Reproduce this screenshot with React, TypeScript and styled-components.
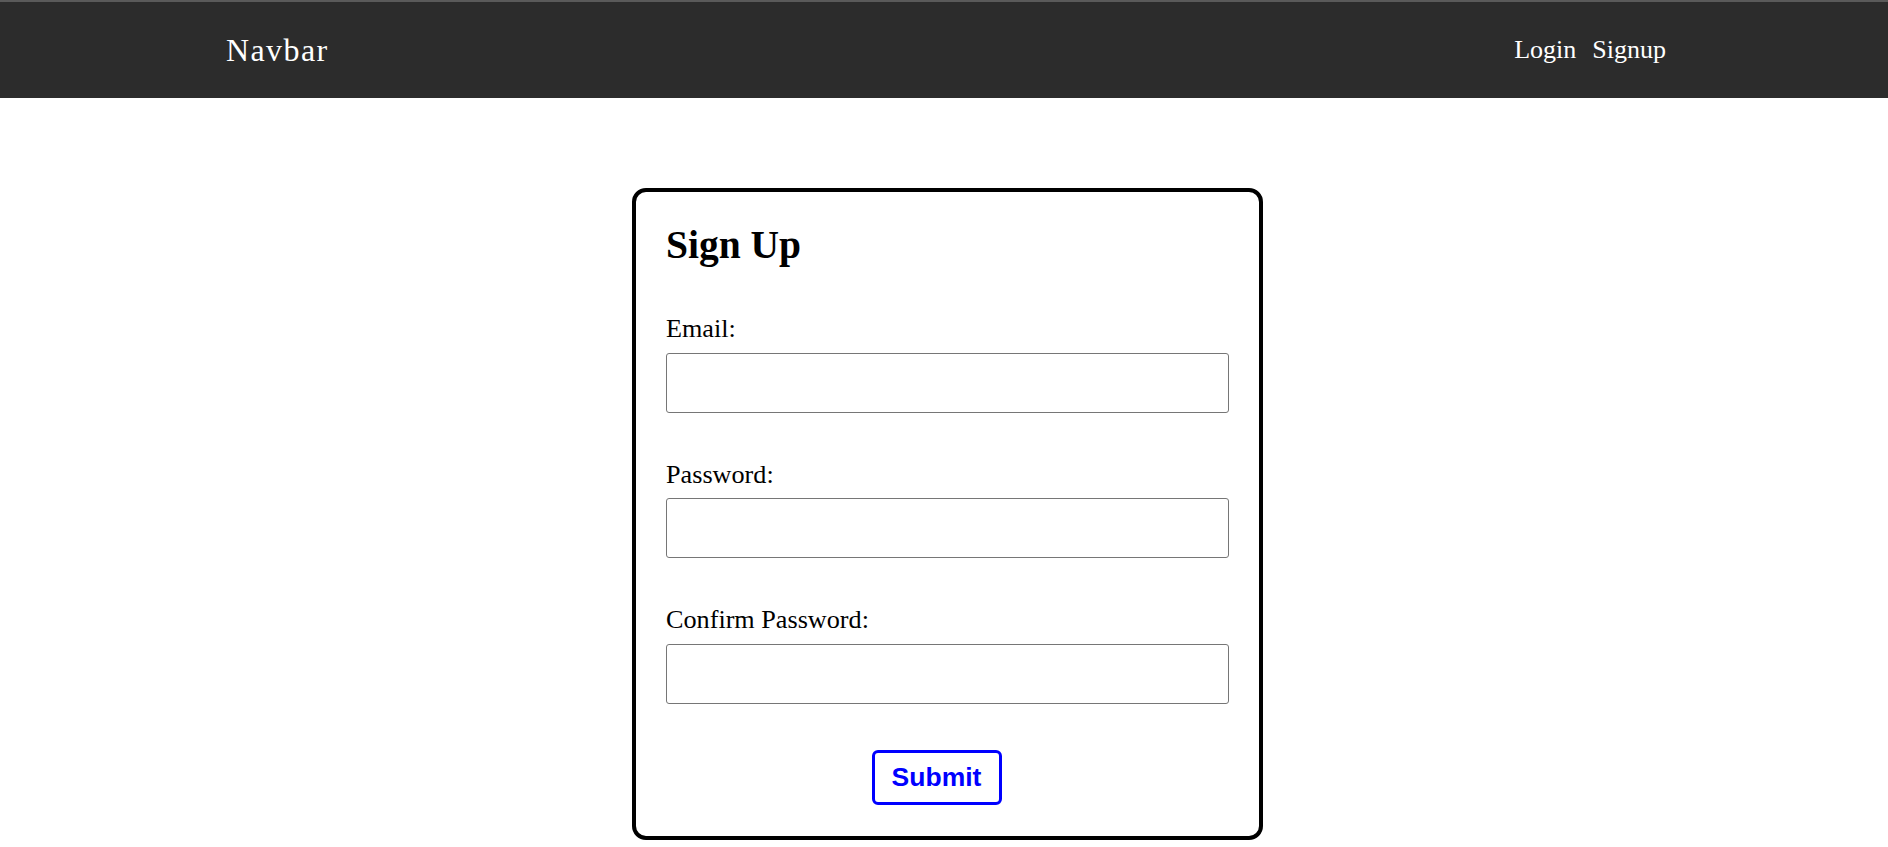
import React, { useState } from 'react'
import styled, { createGlobalStyle } from 'styled-components'

const GlobalStyle = createGlobalStyle`
    html, body {
        margin: 0;
        padding: 0;
        background: #ffffff;
        font-family: 'Liberation Serif', 'Times New Roman', serif;
    }
    * {
        box-sizing: border-box;
    }
`

const Nav = styled.nav`
    height: 98px;
    border-top: 2px solid #5a5a5a;
    background: #2c2c2c;
    display: flex;
    align-items: center;
    justify-content: space-between;
    padding: 0 222px 0 226px;
`

const Brand = styled.div`
    color: #ffffff;
    font-size: 32px;
    line-height: 36px;
    letter-spacing: 1.4px;
`

const NavLinks = styled.div`
    display: flex;
    gap: 16px;
`

const NavLink = styled.a`
    color: #ffffff;
    font-size: 26px;
    line-height: 30px;
    text-decoration: none;
    cursor: pointer;
`

const Main = styled.main`
    display: flex;
    justify-content: center;
    padding: 90px 0 0 7px;
`

const Card = styled.form`
    width: 631px;
    border: 4px solid #000000;
    border-radius: 14px;
    padding: 31px 30px 31px;
    display: flex;
    flex-direction: column;
`

const Title = styled.h2`
    margin: 0 0 47px;
    font-size: 39.5px;
    line-height: 44px;
    font-weight: bold;
    color: #000000;
`

const Fields = styled.div`
    display: flex;
    flex-direction: column;
    gap: 47px;
`

const Field = styled.div`
    display: flex;
    flex-direction: column;
    gap: 9.6px;
`

const Label = styled.label`
    font-size: 26.2px;
    line-height: 29px;
    color: #000000;
`

const Input = styled.input`
    width: 100%;
    height: 60px;
    border: 1px solid #767676;
    border-radius: 3px;
    padding: 0 10px;
    font-size: 25.6px;
    font-family: inherit;
    outline: none;
`

const SubmitButton = styled.button`
    align-self: center;
    margin: 46px 22px 0 0;
    width: 130px;
    height: 55px;
    border: 3px solid #0000ff;
    border-radius: 6px;
    background: #ffffff;
    color: #0000ff;
    font-family: 'Liberation Sans', Arial, sans-serif;
    font-weight: bold;
    font-size: 26.5px;
    cursor: pointer;
    padding: 0;
`

const fields = [
    { key: 'email', label: 'Email:', type: 'email' },
    { key: 'password', label: 'Password:', type: 'password' },
    { key: 'confirm', label: 'Confirm Password:', type: 'password' },
]

const App: React.FunctionComponent = () => {
    const [ values, setvalues ]: any = useState({ email: '', password: '', confirm: '' })

    const _onSubmit = (e: any) => {
        e.preventDefault()
        console.log('signup', values)
    }

    return (
        <>
            <GlobalStyle />
            <Nav>
                <Brand>Navbar</Brand>
                <NavLinks>
                    <NavLink>Login</NavLink>
                    <NavLink>Signup</NavLink>
                </NavLinks>
            </Nav>
            <Main>
                <Card onSubmit={_onSubmit}>
                    <Title>Sign Up</Title>
                    <Fields>
                        {fields.map((f) => (
                            <Field key={f.key}>
                                <Label htmlFor={f.key}>{f.label}</Label>
                                <Input
                                    id={f.key}
                                    type={f.type}
                                    value={values[f.key]}
                                    onChange={(e) => setvalues({ ...values, [f.key]: e.target.value })}
                                />
                            </Field>
                        ))}
                    </Fields>
                    <SubmitButton type='submit'>Submit</SubmitButton>
                </Card>
            </Main>
        </>
    )
}

export default App
